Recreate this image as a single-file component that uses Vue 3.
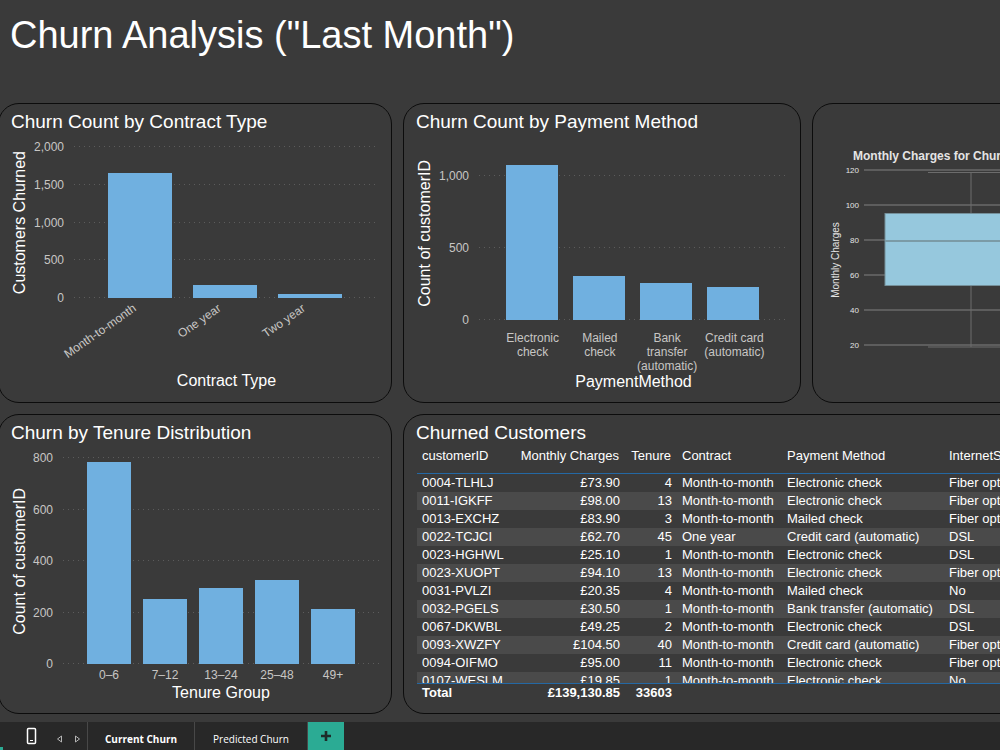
<script setup>
const charts = {
  contract: {
    title: 'Churn Count by Contract Type',
    yTitle: 'Customers Churned',
    xTitle: 'Contract Type',
    max: 2000,
    ticks: [0, 500, 1000, 1500, 2000],
    bars: [
      { label: 'Month-to-month', value: 1660 },
      { label: 'One year', value: 166 },
      { label: 'Two year', value: 48 },
    ],
  },
  payment: {
    title: 'Churn Count by Payment Method',
    yTitle: 'Count of customerID',
    xTitle: 'PaymentMethod',
    max: 1200,
    ticks: [0, 500, 1000],
    bars: [
      { label: 'Electronic check', value: 1075 },
      { label: 'Mailed check', value: 308 },
      { label: 'Bank transfer (automatic)', value: 258 },
      { label: 'Credit card (automatic)', value: 232 },
    ],
  },
  tenure: {
    title: 'Churn by Tenure Distribution',
    yTitle: 'Count of customerID',
    xTitle: 'Tenure Group',
    max: 800,
    ticks: [0, 200, 400, 600, 800],
    bars: [
      { label: '0–6', value: 786 },
      { label: '7–12', value: 254 },
      { label: '13–24', value: 296 },
      { label: '25–48', value: 327 },
      { label: '49+', value: 214 },
    ],
  },
}

const layout = [
  { key: 'contract', area: 'a' },
  { key: 'payment', area: 'b' },
  { key: 'tenure', area: 'd' },
]

const boxTicks = [120, 100, 80, 60, 40, 20]
const boxY = (v) => 66 + ((120 - v) / 20) * 35

const rows = [
  ['0004-TLHLJ', '£73.90', 4, 'Month-to-month', 'Electronic check', 'Fiber optic'],
  ['0011-IGKFF', '£98.00', 13, 'Month-to-month', 'Electronic check', 'Fiber optic'],
  ['0013-EXCHZ', '£83.90', 3, 'Month-to-month', 'Mailed check', 'Fiber optic'],
  ['0022-TCJCI', '£62.70', 45, 'One year', 'Credit card (automatic)', 'DSL'],
  ['0023-HGHWL', '£25.10', 1, 'Month-to-month', 'Electronic check', 'DSL'],
  ['0023-XUOPT', '£94.10', 13, 'Month-to-month', 'Electronic check', 'Fiber optic'],
  ['0031-PVLZI', '£20.35', 4, 'Month-to-month', 'Mailed check', 'No'],
  ['0032-PGELS', '£30.50', 1, 'Month-to-month', 'Bank transfer (automatic)', 'DSL'],
  ['0067-DKWBL', '£49.25', 2, 'Month-to-month', 'Electronic check', 'DSL'],
  ['0093-XWZFY', '£104.50', 40, 'Month-to-month', 'Credit card (automatic)', 'Fiber optic'],
  ['0094-OIFMO', '£95.00', 11, 'Month-to-month', 'Electronic check', 'Fiber optic'],
  ['0107-WESLM', '£19.85', 1, 'Month-to-month', 'Electronic check', 'No'],
]

const fmt = (n) => n.toLocaleString('en-US')
const pct = (v, max) => (v / max) * 100 + '%'
</script>

<template>
  <div class="page">
    <header class="head">
      <h1>Churn Analysis ("Last Month")</h1>
    </header>

    <main class="board">
      <section v-for="c in layout" :key="c.key" class="card" :class="['area-' + c.area, c.key]">
        <h2>{{ charts[c.key].title }}</h2>
        <div class="chart">
          <div class="y-title"><span>{{ charts[c.key].yTitle }}</span></div>
          <div class="ticks">
            <span
              v-for="t in charts[c.key].ticks"
              :key="t"
              class="tick"
              :style="{ bottom: pct(t, charts[c.key].max) }"
            >{{ fmt(t) }}</span>
          </div>
          <div class="plot">
            <i
              v-for="t in charts[c.key].ticks"
              :key="t"
              class="line"
              :style="{ bottom: pct(t, charts[c.key].max) }"
            ></i>
            <div
              v-for="b in charts[c.key].bars"
              :key="b.label"
              class="bar"
              :style="{ height: pct(b.value, charts[c.key].max) }"
            ></div>
          </div>
          <div class="labels">
            <div v-for="b in charts[c.key].bars" :key="b.label" class="label">
              <span>{{ b.label }}</span>
            </div>
          </div>
          <div class="x-title">{{ charts[c.key].xTitle }}</div>
        </div>
      </section>

      <section class="card area-c">
        <svg class="box" viewBox="0 0 290 290" role="img" aria-label="Monthly charges box plot">
          <text x="40" y="56" class="box-title">Monthly Charges for Churned Customers</text>
          <g v-for="t in boxTicks" :key="t">
            <line x1="51" x2="267" :y1="boxY(t)" :y2="boxY(t)" class="box-grid" />
            <text x="46" :y="boxY(t) + 3" class="box-tick">{{ t }}</text>
          </g>
          <path d="M158 68V243" class="whisker" />
          <path d="M115 68.5H202M115 243H202" class="whisker" />
          <rect x="72" y="109.5" width="173" height="72" class="box-body" />
          <path d="M72 137H245" class="median" />
          <text class="box-y" transform="translate(26 156) rotate(-90)">Monthly Charges</text>
        </svg>
      </section>

      <section class="card area-e">
        <h2>Churned Customers</h2>
        <div class="scroll">
          <table>
            <colgroup>
              <col class="w-id" /><col class="w-charge" /><col class="w-tenure" />
              <col class="w-contract" /><col class="w-pay" /><col />
            </colgroup>
            <thead>
              <tr>
                <th>customerID</th>
                <th class="num">Monthly Charges</th>
                <th class="num">Tenure</th>
                <th>Contract</th>
                <th>Payment Method</th>
                <th>InternetService</th>
              </tr>
            </thead>
            <tbody>
              <tr v-for="r in rows" :key="r[0]">
                <td v-for="(v, i) in r" :key="i" :class="{ num: i === 1 || i === 2 }">{{ v }}</td>
              </tr>
            </tbody>
            <tfoot>
              <tr>
                <td>Total</td>
                <td class="num">£139,130.85</td>
                <td class="num">33603</td>
                <td></td>
                <td></td>
                <td></td>
              </tr>
            </tfoot>
          </table>
        </div>
      </section>
    </main>

    <nav class="tabs">
      <div class="tools">
        <button class="phone" aria-label="Mobile layout">
          <svg width="12" height="18" viewBox="0 0 12 18">
            <rect x="1.5" y="1.5" width="8" height="15" rx="1" fill="none" stroke="#fff" stroke-width="1.5" />
            <path d="M4 13.5h3" stroke="#fff" />
          </svg>
        </button>
        <button class="arrow" aria-label="Previous page">
          <svg width="7" height="8" viewBox="0 0 7 8"><path d="M5.5 1v6L1.5 4z" fill="none" stroke="#b5b5b5" /></svg>
        </button>
        <button class="arrow" aria-label="Next page">
          <svg width="7" height="8" viewBox="0 0 7 8"><path d="M1.5 1v6L5.5 4z" fill="none" stroke="#b5b5b5" /></svg>
        </button>
      </div>
      <button class="tab active">Current Churn</button>
      <button class="tab">Predicted Churn</button>
      <button class="add" aria-label="New page">
        <svg width="10" height="10" viewBox="0 0 10 10"><path d="M5 0v10M0 5h10" stroke="#1e2b29" stroke-width="2.6" /></svg>
      </button>
    </nav>
  </div>
</template>

<style>
body {
  margin: 0;
  background: #3a3a3a;
}
</style>

<style scoped>
.page {
  display: flex;
  flex-direction: column;
  min-height: 100vh;
  overflow: hidden;
  background: #3a3a3a;
  color: #fff;
  font-family: "Liberation Sans", Arial, sans-serif;
}
.page *,
.page *::before {
  box-sizing: border-box;
}
.head {
  height: 103px;
  padding: 14px 10px 0;
}
h1 {
  margin: 0;
  font-size: 38px;
  line-height: 42px;
  font-weight: 400;
  white-space: nowrap;
}
.board {
  flex: 1;
  display: grid;
  grid-template-columns: 394fr 398fr 445fr;
  grid-template-rows: 1fr 1fr;
  grid-template-areas: "a b c" "d e e";
  gap: 11px;
  margin: 0 -257px 0 -2px;
  padding-bottom: 8px;
}
.card {
  display: flex;
  flex-direction: column;
  min-width: 0;
  min-height: 300px;
  padding: 6px 12px 10px;
  border: 1px solid #0c0c0c;
  border-radius: 21px;
}
.area-a { grid-area: a; }
.area-b { grid-area: b; }
.area-c { grid-area: c; padding: 0; }
.area-d { grid-area: d; }
.area-e { grid-area: e; padding-right: 0; padding-bottom: 11px; }
h2 {
  margin: 0;
  font-size: 19px;
  line-height: 24px;
  font-weight: 400;
  white-space: nowrap;
}

.chart {
  flex: 1;
  display: grid;
  grid-template-columns: 18px auto 1fr;
  grid-template-rows: 1fr auto 20px;
  margin-top: 13px;
}
.y-title {
  display: flex;
  align-items: center;
  justify-content: center;
}
.y-title span {
  writing-mode: vertical-rl;
  transform: rotate(180deg);
  font-size: 16px;
  line-height: 18px;
  white-space: nowrap;
}
.ticks,
.plot {
  position: relative;
}
.ticks {
  width: 35px;
}
.tick {
  position: absolute;
  right: 0;
  font-size: 12px;
  line-height: 14px;
  margin-bottom: -7px;
  color: #c8c6c4;
}
.plot {
  display: flex;
  align-items: flex-end;
  justify-content: space-around;
  margin-left: 10px;
}
.line {
  position: absolute;
  left: 0;
  right: 0;
  height: 1px;
  background: repeating-linear-gradient(90deg, #5c5c5c 0 1px, transparent 1px 5px);
}
.bar {
  position: relative;
  width: 64px;
  background: #70b0e0;
}
.labels {
  grid-column: 3;
  display: flex;
  margin-left: 10px;
  font-size: 12px;
  line-height: 14px;
  color: #c8c6c4;
  text-align: center;
}
.label {
  position: relative;
  flex: 1 1 0;
  min-width: 0;
}
.x-title {
  grid-column: 3;
  margin-left: 10px;
  font-size: 16px;
  line-height: 20px;
  text-align: center;
}

.contract { padding-bottom: 11px; }
.contract .plot,
.contract .labels { padding: 0 27px 0 24px; }
.contract .labels { height: 73px; }
.contract .label span {
  position: absolute;
  right: calc(50% + 10px);
  top: 3px;
  transform: rotate(-35deg);
  transform-origin: right top;
  white-space: nowrap;
}

.payment .plot { padding: 0 21px 0 19px; }
.payment .labels { padding: 0 20px; }
.payment .bar { width: 52px; }
.payment .labels { padding-top: 11px; height: 52px; }

.tenure .ticks { width: 24px; }
.tenure .plot,
.tenure .labels { padding: 0 18px; }
.tenure .bar { width: 44px; }
.tenure .labels { padding-top: 4px; height: 19px; }

.box {
  width: 290px;
  height: 290px;
}
.box text {
  fill: #e4e4e4;
}
.box .box-title {
  font-size: 12px;
  font-weight: 700;
}
.box .box-tick {
  font-size: 8px;
  text-anchor: end;
}
.box .box-y {
  font-size: 10px;
  text-anchor: middle;
}
.box-grid {
  stroke: #808080;
}
.whisker {
  fill: none;
  stroke: #6c6c6c;
}
.box-body {
  fill: #96c8dd;
  stroke: #75909a;
}
.median {
  stroke: #7b9ba6;
  stroke-width: 2;
}

.scroll {
  flex: 1 1 0;
  min-height: 0;
  overflow: hidden;
}
table {
  width: 100%;
  margin-left: 1px;
  table-layout: fixed;
  border-spacing: 0;
  font-size: 13px;
  line-height: 18px;
  white-space: nowrap;
}
.w-id { width: 92px; }
.w-charge { width: 116px; }
.w-tenure { width: 52px; }
.w-contract { width: 105px; }
.w-pay { width: 162px; }
th,
td {
  padding: 0 5px;
  text-align: left;
}
th {
  padding-top: 2px;
  padding-bottom: 8px;
  border-bottom: 1px solid #2468a4;
  font-weight: 400;
  vertical-align: top;
}
.num {
  text-align: right;
}
th.num {
  padding-right: 6px;
}
tbody tr:nth-child(even) td {
  background: #4a4a4a;
}
tfoot td {
  position: sticky;
  bottom: 0;
  background: #3a3a3a;
  border-top: 1px solid #2468a4;
  font-weight: 700;
}

.tabs {
  position: relative;
  display: flex;
  height: 28px;
  background: #282828;
}
.tabs::before {
  content: "";
  position: absolute;
  left: 0;
  bottom: 0;
  width: 3px;
  height: 3px;
  background: #2bab94;
}
.tabs button {
  display: flex;
  align-items: center;
  justify-content: center;
  padding: 0;
  border: 0;
  background: none;
  color: #fff;
  font-family: "Open Sans", "Noto Sans", sans-serif;
  font-size: 10px;
  line-height: 16px;
}
.tools {
  display: flex;
  align-items: center;
  width: 88px;
  padding-left: 26px;
  border-right: 1px solid #484848;
}
.tools .arrow {
  width: 19px;
  padding-top: 5px;
}
.tools .phone {
  margin-right: 12px;
}
.tabs .tab {
  padding: 6px 18px 0;
  border-right: 1px solid #484848;
}
.tabs .tab.active {
  padding: 6px 17px 0;
  font-weight: 700;
}
.tabs .add {
  width: 36px;
  background: #2bab94;
}
</style>
